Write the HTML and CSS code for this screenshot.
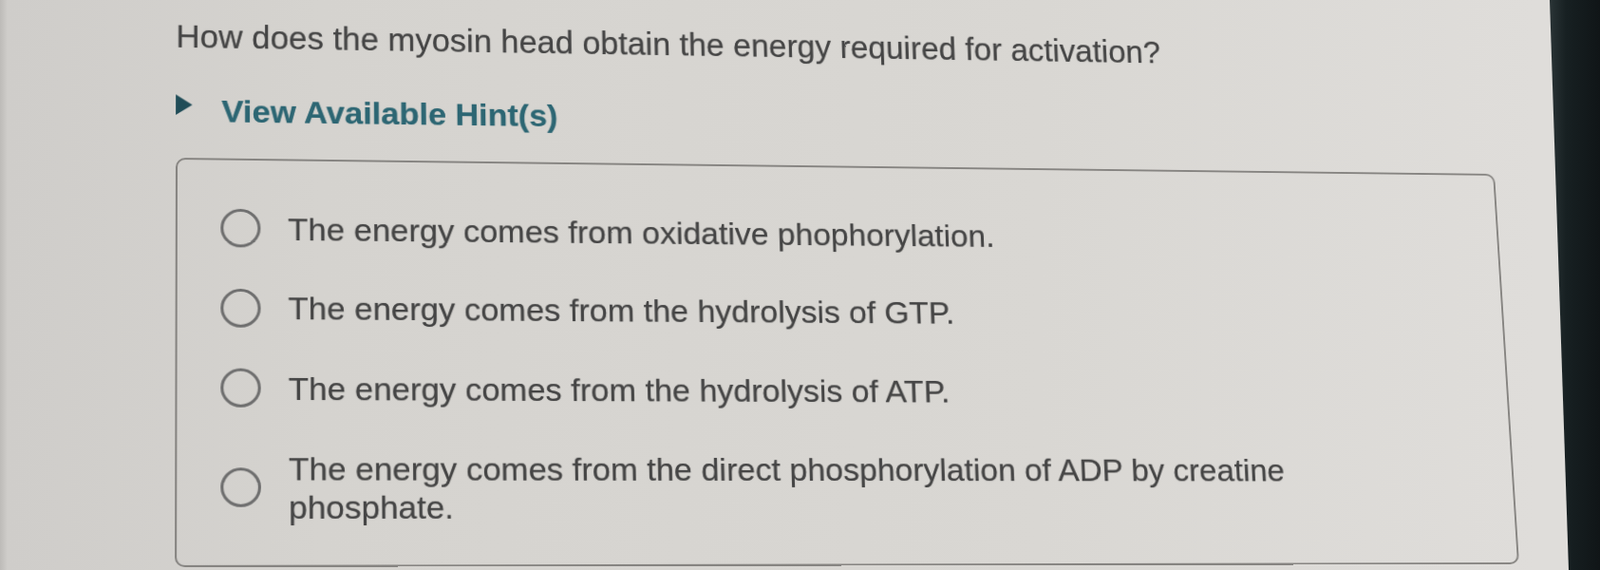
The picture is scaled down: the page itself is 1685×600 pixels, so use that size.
FILE: index.html
```html
<!DOCTYPE html>
<html lang="en">
<head>
<meta charset="utf-8">
<title>Question</title>
<link rel="stylesheet" href="styles.css">
</head>
<body>
<div class="screen">
  <div class="page">
    <p class="question">How does the myosin head obtain the energy required for activation?</p>
    <div class="hint">
      <span class="caret"></span>
      <span class="hint-label">View Available Hint(s)</span>
    </div>
    <div class="choices">
      <label class="choice"><span class="radio"></span><span class="choice-text">The energy comes from oxidative phophorylation.</span></label>
      <label class="choice"><span class="radio"></span><span class="choice-text">The energy comes from the hydrolysis of GTP.</span></label>
      <label class="choice"><span class="radio"></span><span class="choice-text">The energy comes from the hydrolysis of ATP.</span></label>
      <label class="choice"><span class="radio"></span><span class="choice-text">The energy comes from the direct phosphorylation of ADP by creatine phosphate.</span></label>
    </div>
  </div>
</div>
<div class="bezel"></div>
</body>
</html>
```

FILE: styles.css
```css
html, body {
  margin: 0;
  padding: 0;
}

body {
  display: flex;
  width: 1685px;
  height: 600px;
  overflow: hidden;
  font-family: "Liberation Sans", Arial, Helvetica, sans-serif;
  background: linear-gradient(90deg, #bdbbb8 0, #cfcdca 8px, #d5d3cf 20%, #d9d7d3 65%, #dfddda 96%);
}

.screen {
  flex: 1;
  overflow: hidden;
}

.page {
  padding: 15px 0 0 185px;
  transform-origin: 185px 166px;
  transform: matrix3d(1.029251, 0.012597, 0, 0.0000342869,
                      -0.0022792, 0.982321, 0, -0.0000464163,
                      0, 0, 1, 0,
                      0, 0, 0, 1);
}

.question {
  margin: 0;
  font-size: 34.4px;
  line-height: 40px;
  color: #454545;
  white-space: nowrap;
  text-shadow: 0 0 1px rgba(60, 60, 60, 0.55);
}

.hint {
  display: flex;
  align-items: flex-start;
  margin-top: 39.5px;
  height: 40px;
}

.caret {
  flex: none;
  width: 0;
  height: 0;
  margin-top: 3.5px;
  margin-right: 30px;
  border-left: 17px solid #1f4c57;
  border-top: 11px solid transparent;
  border-bottom: 11px solid transparent;
}

.hint-label {
  font-size: 34px;
  line-height: 40px;
  font-weight: 700;
  color: #2c6673;
  text-shadow: 0 0 1px rgba(40, 90, 100, 0.5);
}

.choices {
  box-sizing: border-box;
  margin-top: 31.5px;
  width: 1415px;
  height: 430px;
  border: 2px solid #868481;
  border-radius: 10px;
  padding: 52px 120px 0 44px;
  display: flex;
  flex-direction: column;
  gap: 43.5px;
}

.choice {
  display: flex;
  align-items: center;
  gap: 28px;
  font-size: 34px;
  line-height: 40px;
  color: #454545;
  text-shadow: 0 0 1px rgba(60, 60, 60, 0.55);
}

.radio {
  flex: none;
  box-sizing: border-box;
  width: 41px;
  height: 41px;
  border: 3px solid #6e6e6e;
  border-radius: 50%;
}

.bezel {
  flex: none;
  width: 55px;
  background: linear-gradient(90deg, #2c3638 0, #172022 35%, #101517 100%);
  clip-path: polygon(2px 0, 100% 0, 100% 100%, 22px 100%);
}
```
